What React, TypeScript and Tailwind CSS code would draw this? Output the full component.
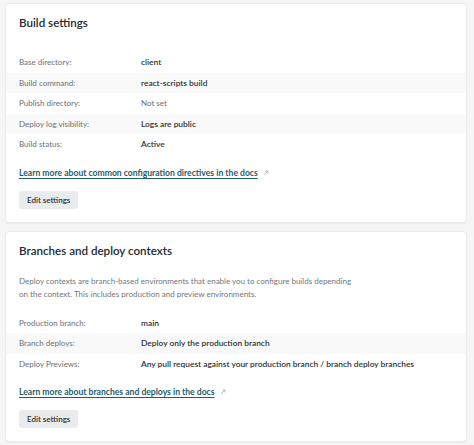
type Row = { label: string; value: string; muted?: boolean };

const buildRows: Row[] = [
  { label: "Base directory:", value: "client" },
  { label: "Build command:", value: "react-scripts build" },
  { label: "Publish directory:", value: "Not set", muted: true },
  { label: "Deploy log visibility:", value: "Logs are public" },
  { label: "Build status:", value: "Active" },
];

const branchRows: Row[] = [
  { label: "Production branch:", value: "main" },
  { label: "Branch deploys:", value: "Deploy only the production branch" },
  {
    label: "Deploy Previews:",
    value: "Any pull request against your production branch / branch deploy branches",
  },
];

function ExternalArrow() {
  return (
    <svg width="6" height="6" viewBox="0 0 8 8" className="ml-[5px] inline-block text-[#a3a8ad]">
      <path d="M1.5 6.5 L6.5 1.5 M3.5 1.5 H6.5 V4.5" stroke="currentColor" strokeWidth="1.1" fill="none" />
    </svg>
  );
}

function SettingsTable({ rows }: { rows: Row[] }) {
  return (
    <dl className="flex flex-col">
      {rows.map((row, i) => (
        <div
          key={row.label}
          className={`flex h-[20.5px] items-center px-[13px] ${i % 2 === 1 ? "bg-[#f9f9f9]" : ""}`}
        >
          <dt className="w-[122px] shrink-0 text-[#6b6f73]">{row.label}</dt>
          <dd
            className={
              row.muted ? "text-[#6b6f73]" : "text-[8.4px] font-semibold text-[#2d3135]"
            }
          >
            {row.value}
          </dd>
        </div>
      ))}
    </dl>
  );
}

function Card({
  title,
  description,
  rows,
  linkText,
}: {
  title: string;
  description?: string[];
  rows: Row[];
  linkText: string;
}) {
  return (
    <section className="rounded-[4px] border border-[#ececec] bg-white pt-[9px] pb-[13px] shadow-[0_1px_2px_rgba(0,0,0,0.06)]">
      <h2 className="px-[13px] text-[11.6px] leading-[20px] font-semibold text-[#24292d]">
        {title}
      </h2>

      {description && (
        <div className="mt-[14px] px-[13px] text-[8px] leading-[13px] text-[#73777b]">
          {description.map((line) => (
            <p key={line}>{line}</p>
          ))}
        </div>
      )}

      <div className={description ? "mt-[12px]" : "mt-[19px]"}>
        <SettingsTable rows={rows} />
      </div>

      <div className="mt-[12px] flex items-center px-[13px]">
        <a className="text-[8.6px] font-bold text-[#1f5d6d] underline decoration-[1px] underline-offset-[2px]">
          {linkText}
        </a>
        <ExternalArrow />
      </div>

      <div className="mt-[12px] px-[13px]">
        <button className="h-[18px] rounded-[3px] bg-[#e9ebed] px-[8px] text-[8px] font-semibold text-[#2d3135]">
          Edit settings
        </button>
      </div>
    </section>
  );
}

export default function App() {
  return (
    <div
      className="min-h-[445px] w-[474px] bg-[#f6f6f7] pt-[3px] pl-[5px] text-[8px] leading-[12px]"
      style={{ fontFamily: "Lato, 'Noto Sans', sans-serif" }}
    >
      <div className="flex w-[462px] flex-col gap-[8px]">
        <Card
          title="Build settings"
          rows={buildRows}
          linkText="Learn more about common configuration directives in the docs"
        />
        <Card
          title="Branches and deploy contexts"
          description={[
            "Deploy contexts are branch-based environments that enable you to configure builds depending",
            "on the context. This includes production and preview environments.",
          ]}
          rows={branchRows}
          linkText="Learn more about branches and deploys in the docs"
        />
      </div>
    </div>
  );
}
